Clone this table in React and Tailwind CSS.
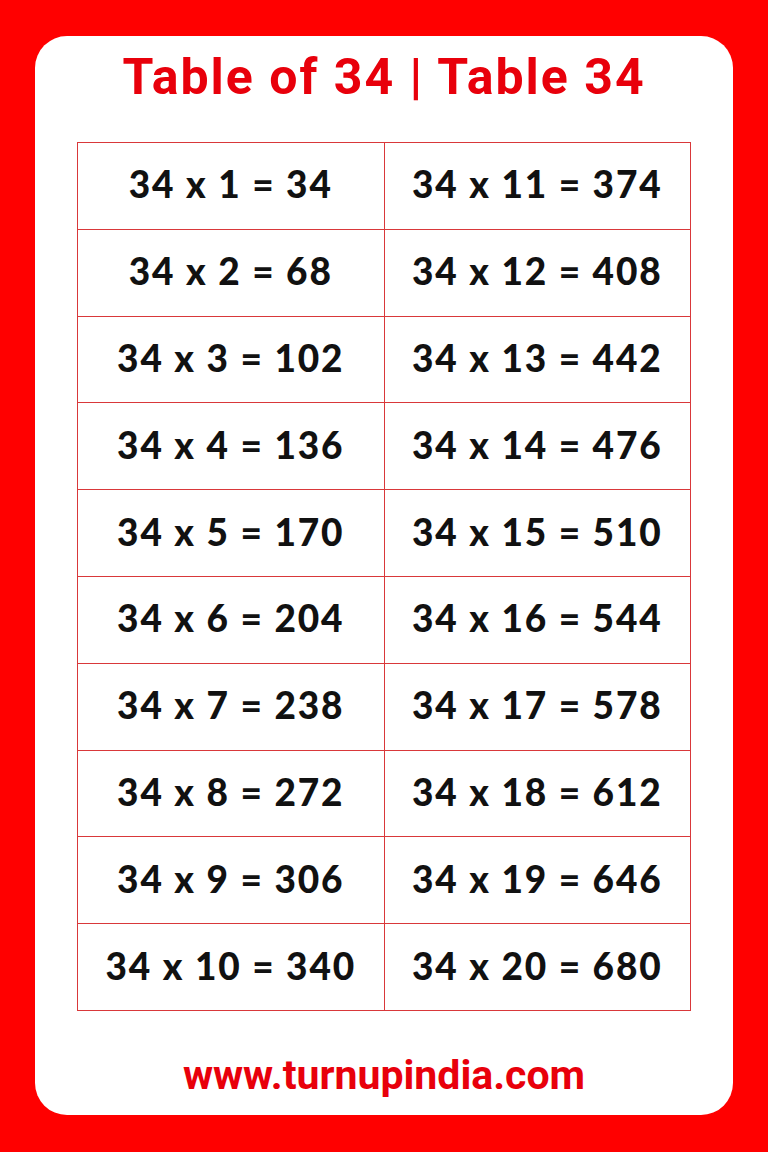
const rows = Array.from({ length: 10 }, (_, i) => i + 1);

function Cell({ n }) {
  return (
    <div className="flex items-center justify-center border-r border-b border-[#d9383a] h-[86.8px]">
      <span
        className="text-[37px] leading-[40px] font-black tracking-[0.05em] text-[#111111] -mt-[3px]"
        style={{ fontFamily: 'Lato, "Open Sans", sans-serif' }}
      >
        34 x {n} = {34 * n}
      </span>
    </div>
  );
}

export default function App() {
  return (
    <div className="w-[768px] h-[1152px] bg-[#ff0000] pt-[36px] px-[35px]">
      <div className="bg-white rounded-[32px] h-[1079px] px-[42px] pt-[15px]">
        <h1
          className="text-center text-[#e8000b] text-[50px] leading-[52px] font-bold tracking-[2px]"
          style={{ fontFamily: 'Roboto, "Open Sans", sans-serif' }}
        >
          Table of 34 | Table 34
        </h1>
        <div className="mt-[39px] grid grid-cols-2 border-l border-t border-[#d9383a]">
          {rows.map((n) => (
            <div key={n} className="contents">
              <Cell n={n} />
              <Cell n={n + 10} />
            </div>
          ))}
        </div>
        <p
          className="mt-[42px] text-center text-[#e8000b] text-[41px] leading-[44px] font-bold"
          style={{ fontFamily: 'Roboto, "Open Sans", sans-serif' }}
        >
          www.turnupindia.com
        </p>
      </div>
    </div>
  );
}
